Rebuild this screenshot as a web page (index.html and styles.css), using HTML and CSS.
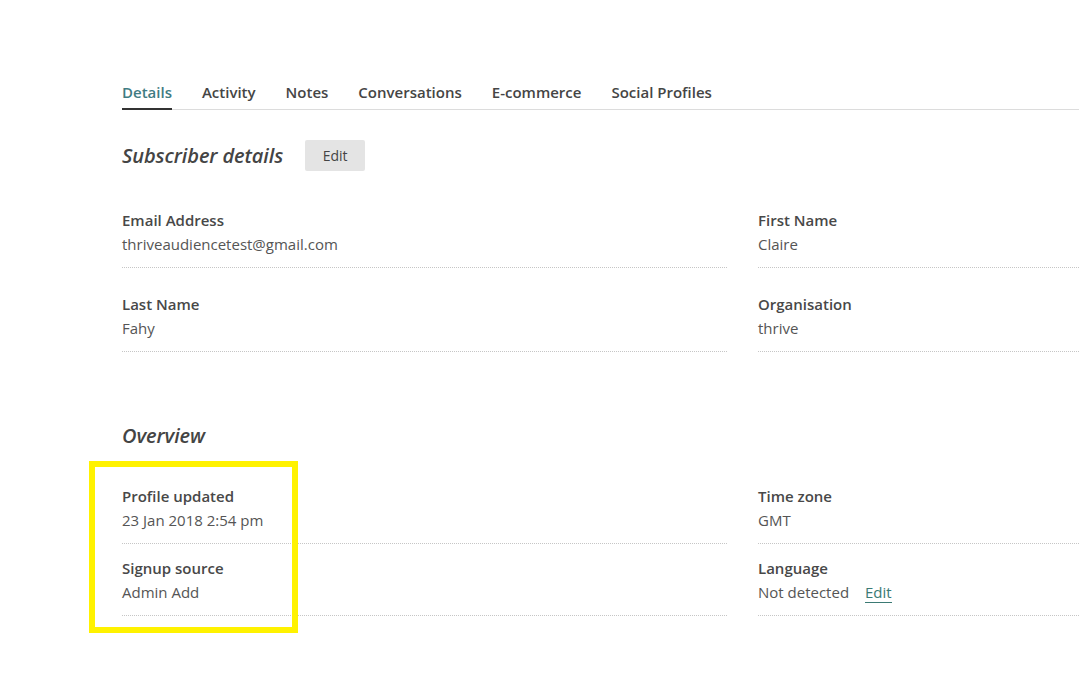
FILE: index.html
```html
<!DOCTYPE html>
<html lang="en">
<head>
<meta charset="utf-8">
<title>Subscriber</title>
<link rel="stylesheet" href="styles.css">
</head>
<body>
<div class="page">
  <nav class="tabs">
    <a class="tab active">Details</a>
    <a class="tab">Activity</a>
    <a class="tab">Notes</a>
    <a class="tab">Conversations</a>
    <a class="tab">E-commerce</a>
    <a class="tab">Social Profiles</a>
  </nav>

  <section class="section">
    <div class="section-head">
      <h2 class="section-title">Subscriber details</h2>
      <button class="btn">Edit</button>
    </div>
    <div class="fields fields-details">
      <div class="field"><div class="label">Email Address</div><div class="value">thriveaudiencetest@gmail.com</div></div>
      <div class="field"><div class="label">First Name</div><div class="value">Claire</div></div>
      <div class="field"><div class="label">Last Name</div><div class="value">Fahy</div></div>
      <div class="field"><div class="label">Organisation</div><div class="value">thrive</div></div>
    </div>
  </section>

  <section class="section section-overview">
    <div class="section-head">
      <h2 class="section-title">Overview</h2>
    </div>
    <div class="fields fields-overview">
      <div class="field"><div class="label">Profile updated</div><div class="value">23 Jan 2018 2:54 pm</div></div>
      <div class="field"><div class="label">Time zone</div><div class="value">GMT</div></div>
      <div class="field"><div class="label">Signup source</div><div class="value">Admin Add</div></div>
      <div class="field"><div class="label">Language</div><div class="value">Not detected <a class="link">Edit</a></div></div>
    </div>
  </section>
</div>
<div class="highlight"></div>
</body>
</html>
```

FILE: styles.css
```css
html, body {
  margin: 0;
  padding: 0;
  background: #fff;
  overflow: hidden;
}
body {
  font-family: "Open Sans", "Noto Sans", sans-serif;
  color: #444;
  width: 1079px;
  height: 693px;
  position: relative;
}
.page {
  padding: 82px 0 0 122px;
  width: 957px;
}
.tabs {
  display: flex;
  gap: 30px;
  border-bottom: 1px solid #dcdcdc;
}
.tab {
  font-size: 15px;
  font-weight: 600;
  line-height: 20px;
  padding-bottom: 6px;
  color: #454545;
  margin-bottom: -1px;
  border-bottom: 2px solid transparent;
}
.tab.active {
  color: #3f7b82;
  border-bottom-color: #333;
}
.section-head {
  display: flex;
  align-items: center;
  gap: 22px;
  height: 31px;
  margin-top: 30px;
}
.section-title {
  margin: 0;
  font-size: 20px;
  font-style: italic;
  font-weight: 600;
  color: #444;
  letter-spacing: -0.1px;
}
.btn {
  font-family: inherit;
  font-size: 14px;
  color: #444;
  background: #e4e4e4;
  border: 0;
  border-radius: 2px;
  width: 60px;
  height: 31px;
  padding: 0;
}
.fields {
  display: grid;
  grid-template-columns: 605px 1fr;
  column-gap: 31px;
}
.fields-details {
  margin-top: 37px;
  row-gap: 24px;
}
.section-overview .section-head {
  margin-top: 68px;
}
.fields-overview {
  margin-top: 33px;
  row-gap: 12px;
}
.field {
  padding-bottom: 11px;
  border-bottom: 1px dotted #c6c6c6;
}
.label {
  font-size: 15px;
  font-weight: 600;
  line-height: 24px;
  color: #484848;
}
.value {
  font-size: 15px;
  line-height: 24px;
  color: #555;
}
.link {
  margin-left: 12px;
  color: #3b7a74;
  text-decoration: none;
  border-bottom: 1px solid #3b7a74;
}
.highlight {
  position: absolute;
  left: 89px;
  top: 461px;
  width: 197px;
  height: 160px;
  border: 6px solid #fff200;
}
```
